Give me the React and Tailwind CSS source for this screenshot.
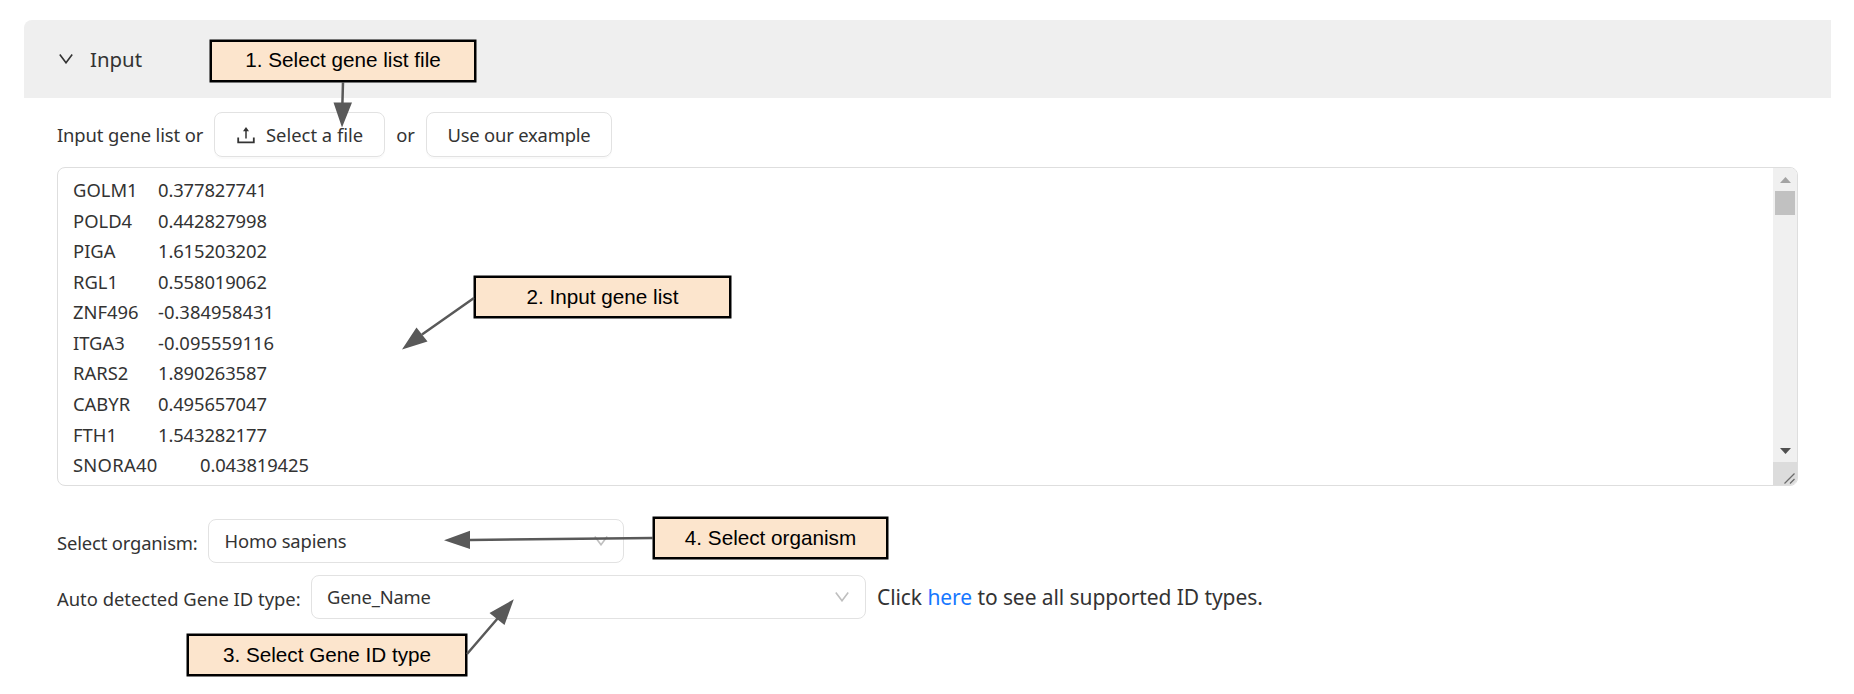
import React from "react";

const genes = [
  ["GOLM1", "0.377827741"],
  ["POLD4", "0.442827998"],
  ["PIGA", "1.615203202"],
  ["RGL1", "0.558019062"],
  ["ZNF496", "-0.384958431"],
  ["ITGA3", "-0.095559116"],
  ["RARS2", "1.890263587"],
  ["CABYR", "0.495657047"],
  ["FTH1", "1.543282177"],
  ["SNORA40", "0.043819425"],
];

function Chevron({ className }) {
  return (
    <svg className={className} viewBox="0 0 14 10" fill="none" stroke="currentColor" strokeWidth="1.6">
      <path d="M0.8 0.5L7 8.8L13.2 0.5" />
    </svg>
  );
}

function Callout({ className, children }) {
  return (
    <div
      className={`absolute flex h-[42px] items-center justify-center border-2 border-black bg-[#fce5cd] font-['Liberation_Sans',sans-serif] text-[20.7px] whitespace-nowrap text-black shadow-[0_0_0_0.5px_#000] ${className}`}
    >
      {children}
    </div>
  );
}

export default function App() {
  return (
    <div className="relative h-[694px] w-[1854px] overflow-hidden bg-white pt-5 pl-6 font-['Noto_Sans',sans-serif] text-[18.4px] text-[#333333]">
      {/* Panel header */}
      <div className="flex h-[78px] w-[1807px] items-center rounded-tl-lg bg-[#efefef] pl-[35px]">
        <Chevron className="h-[10px] w-[14px]" />
        <span className="ml-[17px] text-[20.4px]">Input</span>
      </div>

      <div className="pl-[33px]">
        {/* File row */}
        <div className="mt-[14px] flex h-[45px] items-center">
          <span className="w-[157px] tracking-[-0.12px] whitespace-nowrap">Input gene list or</span>
          <button className="flex h-[45px] w-[171px] items-center rounded-lg border border-[#e2e2e2] pl-[22px] shadow-[0_2px_0_rgba(0,0,0,0.02)]">
            <svg className="mt-[1px] h-[17px] w-[18px]" viewBox="0 0 18 17" fill="none" stroke="currentColor" strokeWidth="1.8">
              <path d="M1.2 10.5v4.8h15.6v-4.8" />
              <path d="M9 11.5V3" strokeWidth="1.5" />
              <path d="M9 0L6 4.2h6z" fill="currentColor" stroke="none" />
            </svg>
            <span className="ml-[11px] whitespace-nowrap">Select a file</span>
          </button>
          <span className="w-[41px] text-center">or</span>
          <button className="h-[45px] w-[186px] rounded-lg border border-[#e2e2e2] tracking-[-0.2px] whitespace-nowrap shadow-[0_2px_0_rgba(0,0,0,0.02)]">
            Use our example
          </button>
        </div>

        {/* Gene list */}
        <div className="mt-[10px] flex h-[319px] w-[1741px] overflow-hidden rounded-lg border border-[#dedede]">
          <div className="flex-1 pt-[6.5px] pl-[15px]">
            {genes.map(([name, value]) => (
              <div key={name} className="flex h-[30.58px] items-center">
                <span className={name.length > 6 ? "w-[127px] tracking-[0.25px]" : "w-[85px]"}>{name}</span>
                <span className={value.startsWith("-") ? "" : "tracking-[-0.12px]"}>{value}</span>
              </div>
            ))}
          </div>
          <div className="flex w-[24px] flex-col bg-[#f0f0f0]">
            <div className="flex h-[23px] items-center justify-center">
              <svg className="h-[6px] w-[11px]" viewBox="0 0 11 6">
                <path d="M0 6L5.5 0L11 6z" fill="#a3a3a3" />
              </svg>
            </div>
            <div className="ml-[2px] h-[24px] w-[20px] bg-[#c1c1c1]" />
            <div className="flex-1" />
            <div className="flex h-[23px] items-center justify-center">
              <svg className="h-[6px] w-[11px]" viewBox="0 0 11 6">
                <path d="M0 0L5.5 6L11 0z" fill="#505050" />
              </svg>
            </div>
            <div className="flex h-[23px] items-end justify-end bg-[#dcdcdc] pr-[2px] pb-[1px]">
              <svg className="h-[11px] w-[11px]" viewBox="0 0 11 11" stroke="#6b6b6b" strokeWidth="1.3">
                <path d="M0.5 10.5L10.5 0.5M6 10.5L10.5 6" />
              </svg>
            </div>
          </div>
        </div>

        {/* Organism */}
        <div className="mt-[33px] flex h-[44px] items-center">
          <span className="w-[151px] pt-[4px] tracking-[-0.15px] whitespace-nowrap">Select organism:</span>
          <div className="flex h-[44px] w-[416px] items-center justify-between rounded-lg border border-[#e2e2e2] pr-[15px] pl-[15.5px]">
            <span className="tracking-[-0.14px]">Homo sapiens</span>
            <Chevron className="h-[10px] w-[14px] text-[#bfbfbf]" />
          </div>
        </div>

        {/* Gene ID type */}
        <div className="mt-[12px] flex h-[44px] items-center">
          <span className="w-[254px] pt-[3px] whitespace-nowrap">Auto detected Gene ID type:</span>
          <div className="flex h-[44px] w-[555px] items-center justify-between rounded-lg border border-[#e2e2e2] pr-[16px] pl-[15px]">
            <span className="tracking-[-0.2px]">Gene_Name</span>
            <Chevron className="h-[10px] w-[14px] text-[#bfbfbf]" />
          </div>
          <span className="ml-[11px] pt-[2px] text-[21px] tracking-[-0.08px] whitespace-nowrap">
            Click <a className="text-[#1677ff]">here</a> to see all supported ID types.
          </span>
        </div>
      </div>

      {/* Step annotations */}
      <Callout className="top-[40px] left-[210px] w-[266px] pb-[2px]">1. Select gene list file</Callout>
      <Callout className="top-[276px] left-[474px] w-[257px]">2. Input gene list</Callout>
      <Callout className="top-[634px] left-[187px] w-[280px]">3. Select Gene ID type</Callout>
      <Callout className="top-[517px] left-[653px] w-[235px]">4. Select organism</Callout>
      <svg className="absolute top-0 left-0 h-[694px] w-[1854px]" viewBox="0 0 1854 694" stroke="#595959" strokeWidth="2.5" fill="#595959">
        <path d="M343 82L342.4 104M474 298L422 334.5M467 654L498 618M653 538L470 540" />
        <path stroke="none" d="M333.5 102.5L352 102.5L342 127.5zM402 349.5L416.5 327.5L427.5 341.5zM513.8 599.3L489.5 613L504.5 625zM444 540.3L470 530.7L470 549z" />
      </svg>
    </div>
  );
}
